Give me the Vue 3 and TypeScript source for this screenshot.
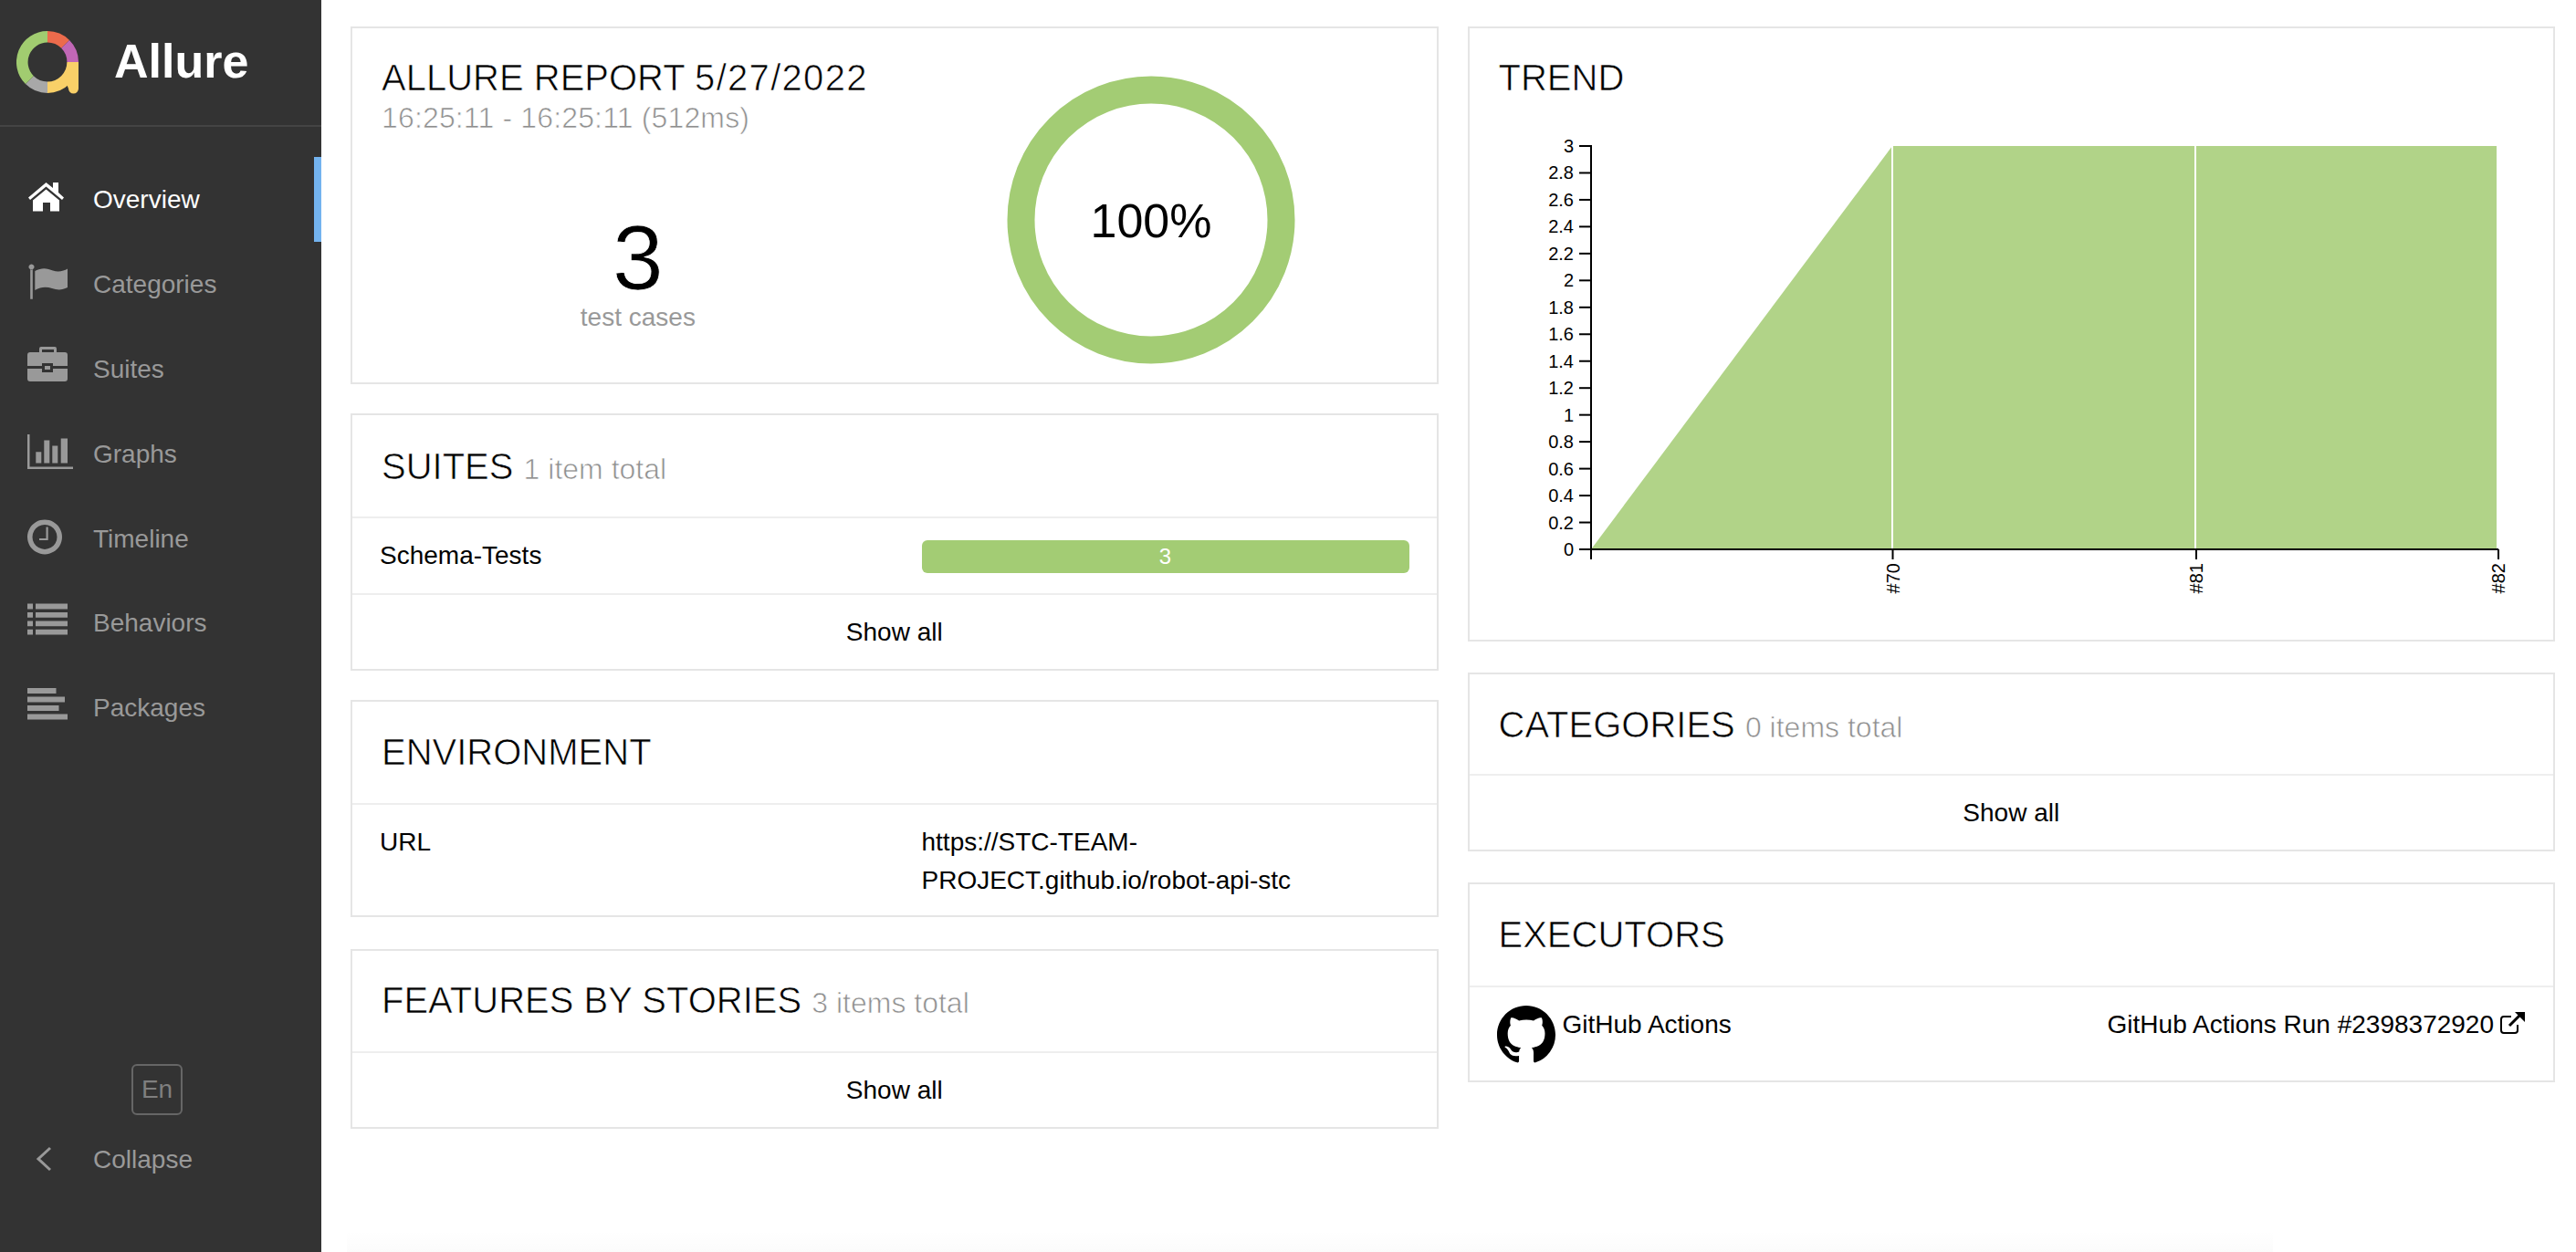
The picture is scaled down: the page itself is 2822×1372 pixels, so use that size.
<template>
  <div class="app">
    <aside class="side-nav">
      <div class="brand">
        <svg class="brand-logo" width="72" height="72" viewBox="0 0 72 72" fill="none">
          <path d="M34 6.3A27.7 27.7 0 0 1 53.6 14.4" stroke="#ec6b4c" stroke-width="12.6" />
          <path d="M53.6 14.4A27.7 27.7 0 0 1 61.7 34" stroke="#c167b6" stroke-width="12.6" />
          <path d="M61.7 34A27.7 27.7 0 0 1 34 61.7" stroke="#f9d068" stroke-width="12.6" />
          <path d="M56 34H68V63A5.5 5.5 0 0 1 57 63L54 56Z" fill="#f9d068" />
          <path d="M34 61.7A27.7 27.7 0 0 1 14.4 53.6" stroke="#a8a8a8" stroke-width="12.6" />
          <path d="M14.4 53.6A27.7 27.7 0 0 1 34 6.3" stroke="#a1cc70" stroke-width="12.6" />
        </svg>
        <span class="brand-name">Allure</span>
      </div>
      <nav class="menu">
        <a v-for="item in navItems" :key="item.label" class="menu-item" :class="{ active: item.active }">
          <svg class="menu-icon" width="56" height="56" viewBox="0 0 56 56">
            <path :d="item.icon" fill="currentColor" fill-rule="evenodd" />
          </svg>
          <span class="menu-label">{{ item.label }}</span>
        </a>
      </nav>
      <div class="side-footer">
        <div class="lang">En</div>
        <div class="collapse">
          <svg width="56" height="32" viewBox="0 0 56 32" fill="none">
            <path d="M18 4L5 16L18 28" stroke="#999" stroke-width="3" />
          </svg>
          <span>Collapse</span>
        </div>
      </div>
    </aside>

    <main class="content">
      <div class="column left">
        <section class="card summary">
          <div class="summary-left">
            <h2 class="title">ALLURE REPORT <span class="report-date">5/27/2022</span></h2>
            <div class="dates">16:25:11 - 16:25:11 (512ms)</div>
            <div class="stat">
              <div class="stat-num">3</div>
              <div class="stat-label">test cases</div>
            </div>
          </div>
          <div class="summary-right">
            <svg width="316" height="316" viewBox="0 0 316 316">
              <circle cx="158" cy="158" r="142.5" fill="none" stroke="#a3cc74" stroke-width="30" />
              <text x="158" y="177" text-anchor="middle" class="pct">100%</text>
            </svg>
          </div>
        </section>

        <section class="card">
          <h2 class="title head">SUITES <span class="count">1 item total</span></h2>
          <div class="row">
            <div class="cell">Schema-Tests</div>
            <div class="cell value"><div class="bar">3</div></div>
          </div>
          <div class="show-all">Show all</div>
        </section>

        <section class="card env">
          <h2 class="title head env-head">ENVIRONMENT</h2>
          <div class="row">
            <div class="cell">URL</div>
            <div class="cell value">https://STC-TEAM-<br />PROJECT.github.io/robot-api-stc</div>
          </div>
        </section>

        <section class="card">
          <h2 class="title head short">FEATURES BY STORIES <span class="count">3 items total</span></h2>
          <div class="show-all">Show all</div>
        </section>
      </div>

      <div class="column right">
        <section class="card trend">
          <h2 class="title head trend-head">TREND</h2>
          <svg class="chart" width="1187" height="558" viewBox="0 0 1187 558">
            <path d="M133 460L463 18H1125V460Z" fill="#b1d388" />
            <path d="M463 18V460M795 18V460" stroke="#fff" stroke-width="2" />
            <path d="M120 18H133V460M120 460H1127M133 460V471M463.500 460V471M796 460V471M1127 460V471" stroke="#000" stroke-width="2" fill="none" />
            <g v-for="t in yTicks" :key="t.label">
              <path :d="`M120 ${t.y}H133`" stroke="#000" stroke-width="2" />
              <text x="114" :y="t.y + 7" text-anchor="end" class="tick">{{ t.label }}</text>
            </g>
            <text
              v-for="t in xTicks"
              :key="t.label"
              class="tick"
              text-anchor="end"
              :transform="`translate(${t.x + 7} 475) rotate(-90)`"
            >{{ t.label }}</text>
          </svg>
        </section>

        <section class="card">
          <h2 class="title head cat-head">CATEGORIES <span class="count">0 items total</span></h2>
          <div class="show-all">Show all</div>
        </section>

        <section class="card">
          <h2 class="title head exec-head">EXECUTORS</h2>
          <div class="row executor">
            <svg class="gh" width="64" height="64" viewBox="0 0 16 16">
              <path d="M8 0C3.58 0 0 3.58 0 8c0 3.54 2.29 6.53 5.47 7.59.4.07.55-.17.55-.38 0-.19-.01-.82-.01-1.49-2.01.37-2.53-.49-2.69-.94-.09-.23-.48-.94-.82-1.13-.28-.15-.68-.52-.01-.53.63-.01 1.08.58 1.23.82.72 1.21 1.87.87 2.33.66.07-.52.28-.87.51-1.07-1.78-.2-3.64-.89-3.64-3.95 0-.87.31-1.59.82-2.15-.08-.2-.36-1.02.08-2.12 0 0 .67-.21 2.2.82.64-.18 1.32-.27 2-.27.68 0 1.36.09 2 .27 1.53-1.04 2.2-.82 2.2-.82.44 1.1.16 1.92.08 2.12.51.56.82 1.27.82 2.15 0 3.07-1.87 3.75-3.65 3.95.29.25.54.73.54 1.48 0 1.07-.01 1.93-.01 2.2 0 .21.15.46.55.38A8.013 8.013 0 0016 8c0-4.42-3.58-8-8-8z" />
            </svg>
            <span class="exec-name">GitHub Actions</span>
            <span class="exec-link">GitHub Actions Run #2398372920</span>
            <svg class="ext" width="28" height="24" viewBox="0 0 28 24" fill="none">
              <path d="M19 14v6a3 3 0 0 1-3 3H4a3 3 0 0 1-3-3V8a3 3 0 0 1 3-3h8" stroke="#000" stroke-width="2" />
              <path d="M10 15L23 2" stroke="#000" stroke-width="3" />
              <path d="M16 0H27V11Z" fill="#000" />
            </svg>
          </div>
        </section>
      </div>
      <div class="page-shadow"></div>
    </main>
  </div>
</template>

<script setup lang="ts">
interface NavItem {
  label: string
  icon: string
  active?: boolean
}

function rect(x: number, y: number, w: number, h: number): string {
  return `M${x} ${y}h${w}v${h}h${-w}Z`
}

const navItems: NavItem[] = [
  {
    label: 'Overview',
    active: true,
    icon: 'M1 26.5L20.5 10L28 16V10H34V21L40 26.5L38 29L20.5 14.5L3 29ZM20.5 17.5L35 29.5V41.6H25V32H17V41.6H6V29.5Z',
  },
  {
    label: 'Categories',
    icon:
      'M3.2 12H5.8V44.8H3.2ZM4.5 6.5a3 3 0 1 1-.01 0ZM8.3 14C16 9.6 22 11 28 13.5C34 15.5 40 14 44 11.5V32C38 35 33 35 27 33C21 31 15 31 8.3 35Z',
  },
  {
    label: 'Suites',
    icon:
      'M3 10H41a3 3 0 0 1 3 3V25H28V22H16V25H0V13a3 3 0 0 1 3-3ZM0 28H16V32H28V28H44V39a3 3 0 0 1-3 3H3a3 3 0 0 1-3-3ZM19 25H25V29H19ZM13 10V6Q13 4 15 4H30Q32 4 32 6V10H29V7H16V10Z',
  },
  {
    label: 'Graphs',
    icon:
      'M0 7H2.5V42.5H50V45H0Z' +
      rect(9.3, 26.2, 6, 12.3) +
      rect(18.3, 13.5, 6, 25) +
      rect(27.3, 19.5, 6, 19) +
      rect(36.7, 11.5, 7.3, 27),
  },
  {
    label: 'Timeline',
    icon:
      'M19 7.4a19 19 0 1 1-.01 0ZM19 12.9a13.5 13.5 0 1 0 .01 0ZM20.5 15.5H22.7V30H13V28H20.5Z',
  },
  {
    label: 'Behaviors',
    icon: [7.6, 17, 26.4, 35.8].map((y) => rect(0, y, 6, 5.8) + rect(9, y, 35, 5.8)).join(''),
  },
  {
    label: 'Packages',
    icon:
      rect(0, 7, 31.5, 6) + rect(0, 16.5, 41, 6) + rect(0, 26, 34.5, 6) + rect(0, 35.5, 44, 6),
  },
]

const yTicks = Array.from({ length: 16 }, (_, i) => ({
  label: String(Number((i * 0.2).toFixed(1))),
  y: 460 - (i / 15) * 442,
}))

const xTicks = [
  { label: '#70', x: 463.5 },
  { label: '#81', x: 796 },
  { label: '#82', x: 1127 },
]
</script>

<style scoped>
.app {
  display: flex;
  height: 1372px;
  overflow: hidden;
  background: #fff;
  color: #000;
  font-family: 'Liberation Sans', Arial, sans-serif;
  font-size: 28px;
  line-height: 42px;
}

.side-nav {
  width: 352px;
  flex-shrink: 0;
  display: flex;
  flex-direction: column;
  background: #333;
  color: #999;
}

.brand {
  height: 137px;
  display: flex;
  align-items: center;
  border-bottom: 2px solid #444;
  padding-left: 18px;
}

.brand-logo {
  margin-top: 3px;
}

.brand-name {
  margin-left: 35px;
  color: #fff;
  font-size: 52px;
  font-weight: 700;
  margin-top: -4px;
}

.menu {
  margin-top: 33px;
  display: flex;
  flex-direction: column;
}

.menu-item {
  height: 92.8px;
  display: flex;
  align-items: center;
  padding-left: 30px;
  box-sizing: border-box;
}

.menu-icon {
  width: 56px;
  margin-right: 16px;
  flex-shrink: 0;
}

.menu-label {
  margin-top: 2px;
}

.menu-item.active {
  color: #fff;
  border-right: 8px solid #73b3ef;
}

.side-footer {
  margin-top: auto;
  padding-bottom: 66px;
}

.lang {
  width: 56px;
  height: 56px;
  margin-left: 144px;
  box-sizing: border-box;
  border: 2px solid #666;
  border-radius: 6px;
  color: #7f7f7f;
  display: flex;
  align-items: center;
  justify-content: center;
}

.collapse {
  margin-top: 12px;
  height: 72px;
  display: flex;
  align-items: center;
  padding-left: 37px;
}

.collapse svg {
  margin-right: 9px;
  flex-shrink: 0;
}

.collapse span {
  margin-top: 2px;
}

.content {
  flex: 1;
  min-width: 0;
  position: relative;
  display: flex;
  gap: 32px;
  padding: 29px 23px 0 32px;
}

.column {
  flex: 1;
  min-width: 0;
  display: flex;
  flex-direction: column;
}

.column.left {
  gap: 32px;
}

.column.right {
  gap: 34px;
}

.card {
  border: 2px solid #e5e5e5;
  background: #fff;
}

/* Helvetica Light is not installed: thin the regular cut with a white stroke */
.title,
.dates,
.stat-num {
  -webkit-text-stroke: 0.7px #fff;
}

.title {
  margin: 0;
  font-weight: 400;
  font-size: 40px;
  line-height: 44px;
}

.report-date {
  letter-spacing: 1.3px;
}

.title.head {
  height: 111px;
  box-sizing: border-box;
  padding: 34px 32px 0;
}

.title.head.short {
  height: 110px;
  padding-top: 32px;
}

.title.head.env-head {
  padding-top: 33px;
}

.title.head.trend-head {
  padding-top: 32px;
}

.title.head.cat-head {
  height: 109px;
  padding-top: 33px;
}

.title.head.exec-head {
  padding-top: 33px;
}

.count,
.dates {
  font-size: 32px;
  color: #8f8f8f;
}

.summary {
  height: 392px;
  box-sizing: border-box;
  padding: 32px 32px 0;
  display: flex;
}

.summary-left,
.summary-right {
  flex: 1;
  min-width: 0;
}

.dates {
  line-height: 44px;
  letter-spacing: 0.15px;
}

.stat {
  margin-top: 89px;
  text-align: center;
}

.stat-num {
  font-size: 100px;
  line-height: 84px;
}

.stat-label {
  color: #999;
  margin-top: 3px;
}

.summary-right {
  display: flex;
  justify-content: center;
  padding-top: 20px;
}

.pct {
  font-size: 52px;
  font-family: 'Liberation Sans', Arial, sans-serif;
}

.row {
  border-top: 2px solid #eee;
  display: flex;
  padding: 20px 30px;
}

.cell {
  flex: 1;
  min-width: 0;
}

.cell.value {
  flex: 0 0 534px;
}

.bar {
  height: 36px;
  margin: 4px 0 2px;
  background: #a3cc74;
  border-radius: 6px;
  color: #fff;
  font-size: 24px;
  line-height: 36px;
  text-align: center;
}

.show-all {
  border-top: 2px solid #eee;
  height: 81px;
  display: flex;
  align-items: center;
  justify-content: center;
}

.env {
  margin-bottom: 3px;
}

.env .row {
  padding-bottom: 17px;
}

.trend {
  height: 674px;
  box-sizing: border-box;
}

.chart {
  display: block;
}

.tick {
  font-size: 20px;
  font-family: 'Liberation Sans', Arial, sans-serif;
}

.executor {
  height: 104px;
  box-sizing: border-box;
  align-items: flex-start;
  padding: 20px 30px 0 30px;
}

.gh {
  flex-shrink: 0;
}

.exec-name {
  margin-left: 8px;
  flex: 1;
}

.ext {
  margin-left: 7px;
  margin-top: 7px;
  flex-shrink: 0;
}

.page-shadow {
  position: absolute;
  left: 28px;
  bottom: 0;
  width: 2110px;
  height: 24px;
  background: linear-gradient(to bottom, rgba(0, 0, 0, 0), rgba(0, 0, 0, 0.015));
}
</style>

<style>
html,
body {
  margin: 0;
  background: #fff;
}
</style>
